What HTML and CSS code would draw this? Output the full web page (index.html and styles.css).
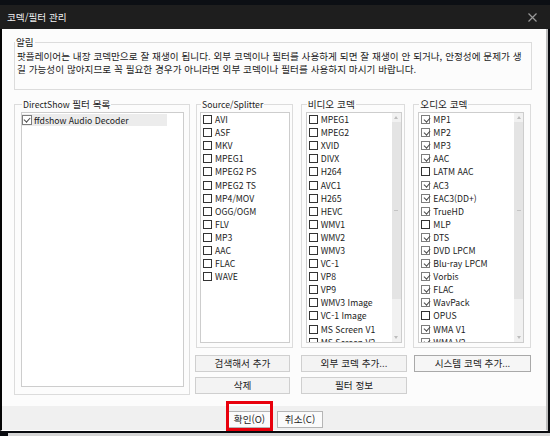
FILE: index.html
```html
<!DOCTYPE html>
<html lang="ko">
<head>
<meta charset="utf-8">
<title>코덱/필터 관리</title>
<link rel="stylesheet" href="styles.css">
</head>
<body>
<div class="window">
  <div class="topstrip"></div>
  <div class="titlebar">
    <span class="title ko">코덱/필터 관리</span>
    <svg class="close" width="9" height="9" viewBox="0 0 9 9"><path d="M0.5 0.5 L8.5 8.5 M8.5 0.5 L0.5 8.5" stroke="#9a9a9a" stroke-width="1.2" fill="none"/></svg>
  </div>
  <div class="frame">
    <div class="content">
      <fieldset class="group notice">
        <legend class="ko">알림</legend>
        <p class="ko">팟플레이어는 내장 코덱만으로 잘 재생이 됩니다. 외부 코덱이나 필터를 사용하게 되면 잘 재생이 안 되거나, 안정성에 문제가 생<br>길 가능성이 많아지므로 꼭 필요한 경우가 아니라면 외부 코덱이나 필터를 사용하지 마시기 바랍니다.</p>
      </fieldset>
      <div class="main">
        <fieldset class="group ds">
          <legend>DirectShow <span class="ko">필터 목록</span></legend>
          <div class="list dslist">
            <div class="dsitem"><span class="cb on"></span><span>ffdshow Audio Decoder</span></div>
          </div>
        </fieldset>
        <div class="right">
          <div class="cols">
            <fieldset class="group src">
              <legend>Source/Splitter</legend>
              <div class="list srclist">
                <div class="items">
                  <div class="item"><span class="cb"></span>AVI</div>
                  <div class="item"><span class="cb"></span>ASF</div>
                  <div class="item"><span class="cb"></span>MKV</div>
                  <div class="item"><span class="cb"></span>MPEG1</div>
                  <div class="item"><span class="cb"></span>MPEG2 PS</div>
                  <div class="item"><span class="cb"></span>MPEG2 TS</div>
                  <div class="item"><span class="cb"></span>MP4/MOV</div>
                  <div class="item"><span class="cb"></span>OGG/OGM</div>
                  <div class="item"><span class="cb"></span>FLV</div>
                  <div class="item"><span class="cb"></span>MP3</div>
                  <div class="item"><span class="cb"></span>AAC</div>
                  <div class="item"><span class="cb"></span>FLAC</div>
                  <div class="item"><span class="cb"></span>WAVE</div>
                </div>
              </div>
            </fieldset>
            <fieldset class="group vid">
              <legend class="ko">비디오 코덱</legend>
              <div class="list vidlist">
                <div class="items">
                  <div class="item"><span class="cb"></span>MPEG1</div>
                  <div class="item"><span class="cb"></span>MPEG2</div>
                  <div class="item"><span class="cb"></span>XVID</div>
                  <div class="item"><span class="cb"></span>DIVX</div>
                  <div class="item"><span class="cb"></span>H264</div>
                  <div class="item"><span class="cb"></span>AVC1</div>
                  <div class="item"><span class="cb"></span>H265</div>
                  <div class="item"><span class="cb"></span>HEVC</div>
                  <div class="item"><span class="cb"></span>WMV1</div>
                  <div class="item"><span class="cb"></span>WMV2</div>
                  <div class="item"><span class="cb"></span>WMV3</div>
                  <div class="item"><span class="cb"></span>VC-1</div>
                  <div class="item"><span class="cb"></span>VP8</div>
                  <div class="item"><span class="cb"></span>VP9</div>
                  <div class="item"><span class="cb"></span>WMV3 Image</div>
                  <div class="item"><span class="cb"></span>VC-1 Image</div>
                  <div class="item"><span class="cb"></span>MS Screen V1</div>
                  <div class="item"><span class="cb"></span>MS Screen V2</div>
                </div>
                <div class="sb"><span class="up"></span><span class="thumb"><span class="grip"></span></span><span class="track"></span><span class="down"></span></div>
              </div>
            </fieldset>
            <fieldset class="group aud">
              <legend class="ko">오디오 코덱</legend>
              <div class="list audlist">
                <div class="items">
                  <div class="item"><span class="cb on"></span>MP1</div>
                  <div class="item"><span class="cb on"></span>MP2</div>
                  <div class="item"><span class="cb on"></span>MP3</div>
                  <div class="item"><span class="cb on"></span>AAC</div>
                  <div class="item"><span class="cb"></span>LATM AAC</div>
                  <div class="item"><span class="cb on"></span>AC3</div>
                  <div class="item"><span class="cb on"></span>EAC3(DD+)</div>
                  <div class="item"><span class="cb on"></span>TrueHD</div>
                  <div class="item"><span class="cb"></span>MLP</div>
                  <div class="item"><span class="cb on"></span>DTS</div>
                  <div class="item"><span class="cb on"></span>DVD LPCM</div>
                  <div class="item"><span class="cb on"></span>Blu-ray LPCM</div>
                  <div class="item"><span class="cb on"></span>Vorbis</div>
                  <div class="item"><span class="cb on"></span>FLAC</div>
                  <div class="item"><span class="cb on"></span>WavPack</div>
                  <div class="item"><span class="cb"></span>OPUS</div>
                  <div class="item"><span class="cb on"></span>WMA V1</div>
                  <div class="item"><span class="cb on"></span>WMA V2</div>
                </div>
                <div class="sb"><span class="up"></span><span class="thumb"><span class="grip"></span></span><span class="track"></span><span class="down"></span></div>
              </div>
            </fieldset>
          </div>
          <div class="btnrow row1">
            <button class="btn ko w1">검색해서 추가</button>
            <button class="btn ko w2">외부 코덱 추가...</button>
            <button class="btn ko w3 focus">시스템 코덱 추가...</button>
          </div>
          <div class="btnrow row2">
            <button class="btn ko w1">삭제</button>
            <button class="btn ko w2">필터 정보</button>
          </div>
        </div>
      </div>
    </div>
    <div class="footer">
      <button class="fbtn ko ok">확인(O)</button>
      <button class="fbtn ko cancel">취소(C)</button>
      <div class="redbox"></div>
    </div>
  </div>
  <div class="under"></div>
</div>
</body>
</html>
```

FILE: styles.css
```css
* { box-sizing: border-box; }
html, body { margin: 0; padding: 0; }
body {
  width: 550px;
  height: 436px;
  overflow: hidden;
  background: #0a0c10;
  font-family: "Noto Sans CJK KR", "Noto Sans", sans-serif;
  font-size: 8.7px;
  line-height: 13px;
  color: #1b1b1b;
}
.ko {
  font-size: 9.6px;
  letter-spacing: 0;
  word-spacing: 0.2px;
}
.window {
  width: 550px;
  height: 436px;
  display: flex;
  flex-direction: column;
}
.topstrip { height: 5px; background: #0c0f14; }
.titlebar {
  height: 24px;
  background: #1e1e1e;
  display: flex;
  align-items: center;
  justify-content: space-between;
  padding: 0 13px 0 7px;
  color: #f2f2f2;
}
.close { display: block; }
.frame {
  height: 402px;
  margin-right: 2px;
  border-left: 2px solid #050505;
  border-right: 2px solid #bdbdbd;
  border-bottom: 1px solid #ffffff;
  background: #fcfcfc;
  display: flex;
  flex-direction: column;
}
.content {
  height: 377px;
  padding: 7px 0 0 12px;
}
.group {
  margin: 0;
  padding: 0;
  border: 1px solid #dcdcdc;
  min-width: 0;
}
.group legend {
  padding: 0 1px;
  margin-left: 1px;
  line-height: 13px;
}
.notice { width: 518px; }
.notice legend { margin-left: 0; }
.notice p {
  margin: 0;
  padding: 1px 2px 13px 2px;
  line-height: 13px;
  white-space: nowrap;
}
.main {
  margin-top: 8px;
  display: flex;
  align-items: flex-start;
}
.ds {
  width: 176px;
  padding: 1px 5px 7px 6px;
  margin-right: 5px;
}
.list {
  background: #ffffff;
  border: 1px solid #cdcdcd;
  display: flex;
  overflow: hidden;
}
.dslist { width: 163px; height: 275px; display: block; }
.dsitem {
  margin-top: 1px;
  width: 145px;
  height: 12px;
  background: #ececec;
  display: flex;
  align-items: center;
  gap: 2px;
  white-space: nowrap;
}
.dsitem .cb { width: 10px; height: 10px; }
.right { width: 336px; }
.cols { display: flex; gap: 8px; margin-left: 1px; }
.src { width: 97px; padding: 1px 2px 4px 3px; }
.vid { width: 105px; padding: 1px 3px 4px 4px; }
.aud { width: 118px; padding: 1px 6px 4px 4px; }
.srclist { width: 90px; height: 231px; }
.vidlist { width: 96px; height: 231px; }
.audlist { width: 106px; height: 231px; }
.items { flex: 1; overflow: hidden; }
.item {
  height: 13.1px;
  display: flex;
  align-items: center;
  gap: 3px;
  padding-left: 2px;
  white-space: nowrap;
}
.cb {
  position: relative;
  flex: none;
  width: 9px;
  height: 9px;
  border: 1px solid #333333;
  background: #ffffff;
}
.cb.on { border-color: #7d7d7d; }
.cb.on::after {
  content: "";
  position: absolute;
  left: 2.3px;
  top: -0.2px;
  width: 2.6px;
  height: 5.4px;
  border-right: 1px solid #4a4a4a;
  border-bottom: 1px solid #4a4a4a;
  transform: rotate(42deg);
}
.sb {
  flex: none;
  width: 9px;
  background: #f1f1f1;
  display: flex;
  flex-direction: column;
  align-items: center;
}
.up, .down {
  flex: none;
  height: 8px;
  width: 9px;
  display: flex;
  align-items: center;
  justify-content: center;
}
.up::before {
  content: "";
  border-left: 2.5px solid transparent;
  border-right: 2.5px solid transparent;
  border-bottom: 3px solid #bdbdbd;
}
.down { height: 9px; }
.down::before {
  content: "";
  border-left: 2.5px solid transparent;
  border-right: 2.5px solid transparent;
  border-top: 3px solid #bdbdbd;
}
.thumb {
  flex: none;
  margin-top: 1px;
  width: 9px;
  height: 177px;
  background: #e4e4e4;
  display: flex;
  align-items: center;
  justify-content: center;
}
.grip { width: 4px; height: 1px; background: #c4c4c4; }
.track { flex: 1; }
.btnrow { display: flex; height: 17px; }
.row1 { margin-top: 7px; }
.row2 { margin-top: 5px; }
.btn {
  height: 17px;
  padding: 0;
  margin: 0;
  background: #f3f3f3;
  border: 1px solid #cfcfcf;
  color: #1b1b1b;
  font-family: "Noto Sans CJK KR", "Noto Sans", sans-serif;
  line-height: 13px;
}
.w1 { width: 95px; }
.w2 { width: 106px; margin-left: 11px; }
.w3 { width: 117px; margin-left: 7px; }
.btn.focus { border-color: #a9a9a9; background: #f6f6f6; }
.footer {
  position: relative;
  height: 24px;
  background: #f0f0f0;
  display: flex;
  align-items: flex-start;
  padding: 5px 0 0 226px;
  gap: 6px;
}
.fbtn {
  height: 17px;
  padding: 0;
  margin: 0;
  background: #fbfbfb;
  border: 1px solid #b5b5b5;
  color: #1b1b1b;
  font-family: "Noto Sans CJK KR", "Noto Sans", sans-serif;
  line-height: 13px;
}
.ok { width: 43px; }
.cancel { width: 46px; }
.redbox {
  position: absolute;
  left: 224px;
  top: -5px;
  width: 47px;
  height: 30px;
  border: 3px solid #e8000c;
}
.under {
  margin-top: 2px;
  height: 3px;
  margin-left: 8px;
  background: #d6d6d6;
}
```
